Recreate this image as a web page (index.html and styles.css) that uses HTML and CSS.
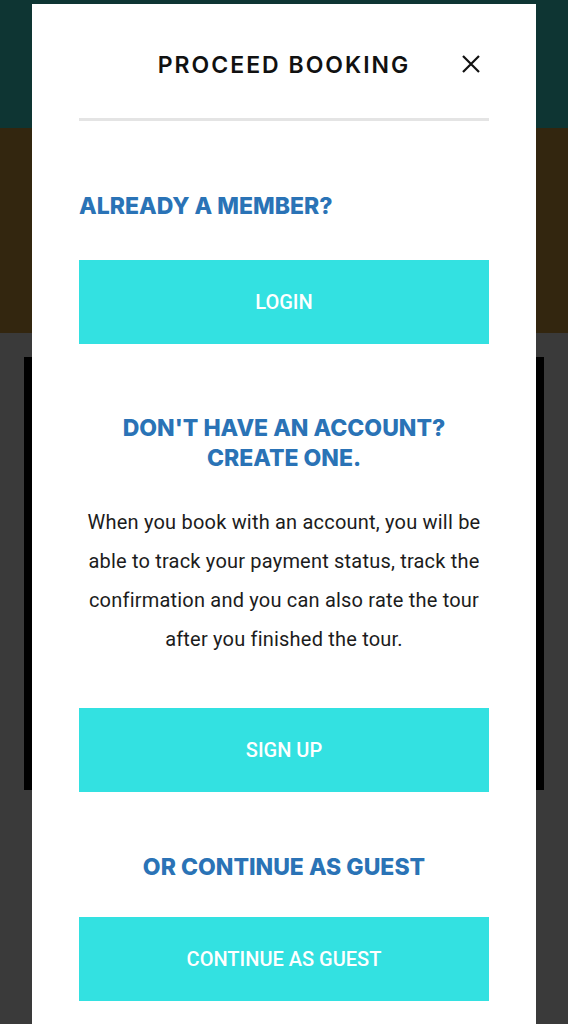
FILE: index.html
```html
<!DOCTYPE html>
<html lang="en">
<head>
    <meta charset="UTF-8">
    <meta name="viewport" content="width=device-width, initial-scale=1.0">
    <title>Proceed Booking</title>
    <link rel="stylesheet" href="styles.css">
</head>
<body>
    <div class="page">
        <div class="band-top"></div>
        <div class="band-brown"></div>
        <div class="band-grey">
            <div class="black-box"></div>
        </div>
    </div>

    <div class="modal">
        <div class="modal-header">
            <h2>PROCEED BOOKING</h2>
            <button class="close" aria-label="Close">
                <svg width="20" height="20" viewBox="0 0 20 20">
                    <path d="M2 2 L18 18 M18 2 L2 18" stroke="#111" stroke-width="2.2" fill="none"/>
                </svg>
            </button>
        </div>
        <div class="divider"></div>

        <h3 class="section-title member">ALREADY A MEMBER?</h3>
        <a href="#" class="btn login">LOGIN</a>

        <h3 class="section-title create">DON'T HAVE AN ACCOUNT?<br>CREATE ONE.</h3>
        <p class="info">When you book with an account, you will be able to track your payment status, track the confirmation and you can also rate the tour after you finished the tour.</p>
        <a href="#" class="btn signup">SIGN UP</a>

        <h3 class="section-title guest">OR CONTINUE AS GUEST</h3>
        <a href="#" class="btn guest-btn">CONTINUE AS GUEST</a>
    </div>
</body>
</html>
```

FILE: styles.css
```css
body {
    margin: 0;
    padding: 0;
    font-family: Roboto, "Liberation Sans", sans-serif;
    background-color: #3a3a3a;
    height: 1024px;
    overflow: hidden;
}
.page {
    display: flex;
    flex-direction: column;
    height: 1024px;
}
.band-top {
    height: 128px;
    background-color: #0e3533;
}
.band-brown {
    height: 205px;
    background-color: #33260f;
}
.band-grey {
    flex: 1;
    background-color: #3a3a3a;
    padding: 24px 24px 0 24px;
}
.black-box {
    height: 433px;
    background-color: #000;
}
.modal {
    position: fixed;
    top: 4px;
    left: 32px;
    width: 504px;
    bottom: 0;
    background-color: #fff;
    padding: 0 47px;
    box-sizing: border-box;
    display: flex;
    flex-direction: column;
}
.modal-header {
    position: relative;
    padding-top: 46px;
    height: 72px;
    box-sizing: border-box;
}
.modal-header h2 {
    margin: 0;
    text-align: center;
    font-family: Inter, "Noto Sans", sans-serif;
    font-weight: 600;
    font-size: 23px;
    letter-spacing: 2px;
    color: #111;
    line-height: 30px;
}
.close {
    position: absolute;
    right: 8px;
    top: 50px;
    background: none;
    border: none;
    padding: 0;
    cursor: pointer;
}
.divider {
    margin-top: 42px;
    height: 3px;
    background-color: #e4e4e4;
}
.section-title {
    margin: 0;
    font-family: Inter, "Noto Sans", sans-serif;
    font-weight: 800;
    font-size: 23px;
    line-height: 30px;
    color: #2a73b6;
    text-align: center;
}
.section-title.member {
    text-align: left;
    margin-top: 70px;
}
.section-title.create {
    margin-top: 69px;
}
.section-title.guest {
    margin-top: 60px;
}
.btn {
    display: flex;
    align-items: center;
    justify-content: center;
    height: 84px;
    background-color: #33e1e1;
    color: #fff;
    text-decoration: none;
    font-family: Roboto, "Liberation Sans", sans-serif;
    font-weight: 500;
    font-size: 20px;
}
.btn.login {
    margin-top: 39px;
}
.btn.signup {
    margin-top: 49px;
}
.btn.guest-btn {
    margin-top: 35px;
}
.info {
    margin: 30px 0 0 0;
    padding: 0 4px;
    text-align: center;
    font-size: 20px;
    letter-spacing: 0.2px;
    line-height: 39px;
    color: #1c1c1c;
}
```
